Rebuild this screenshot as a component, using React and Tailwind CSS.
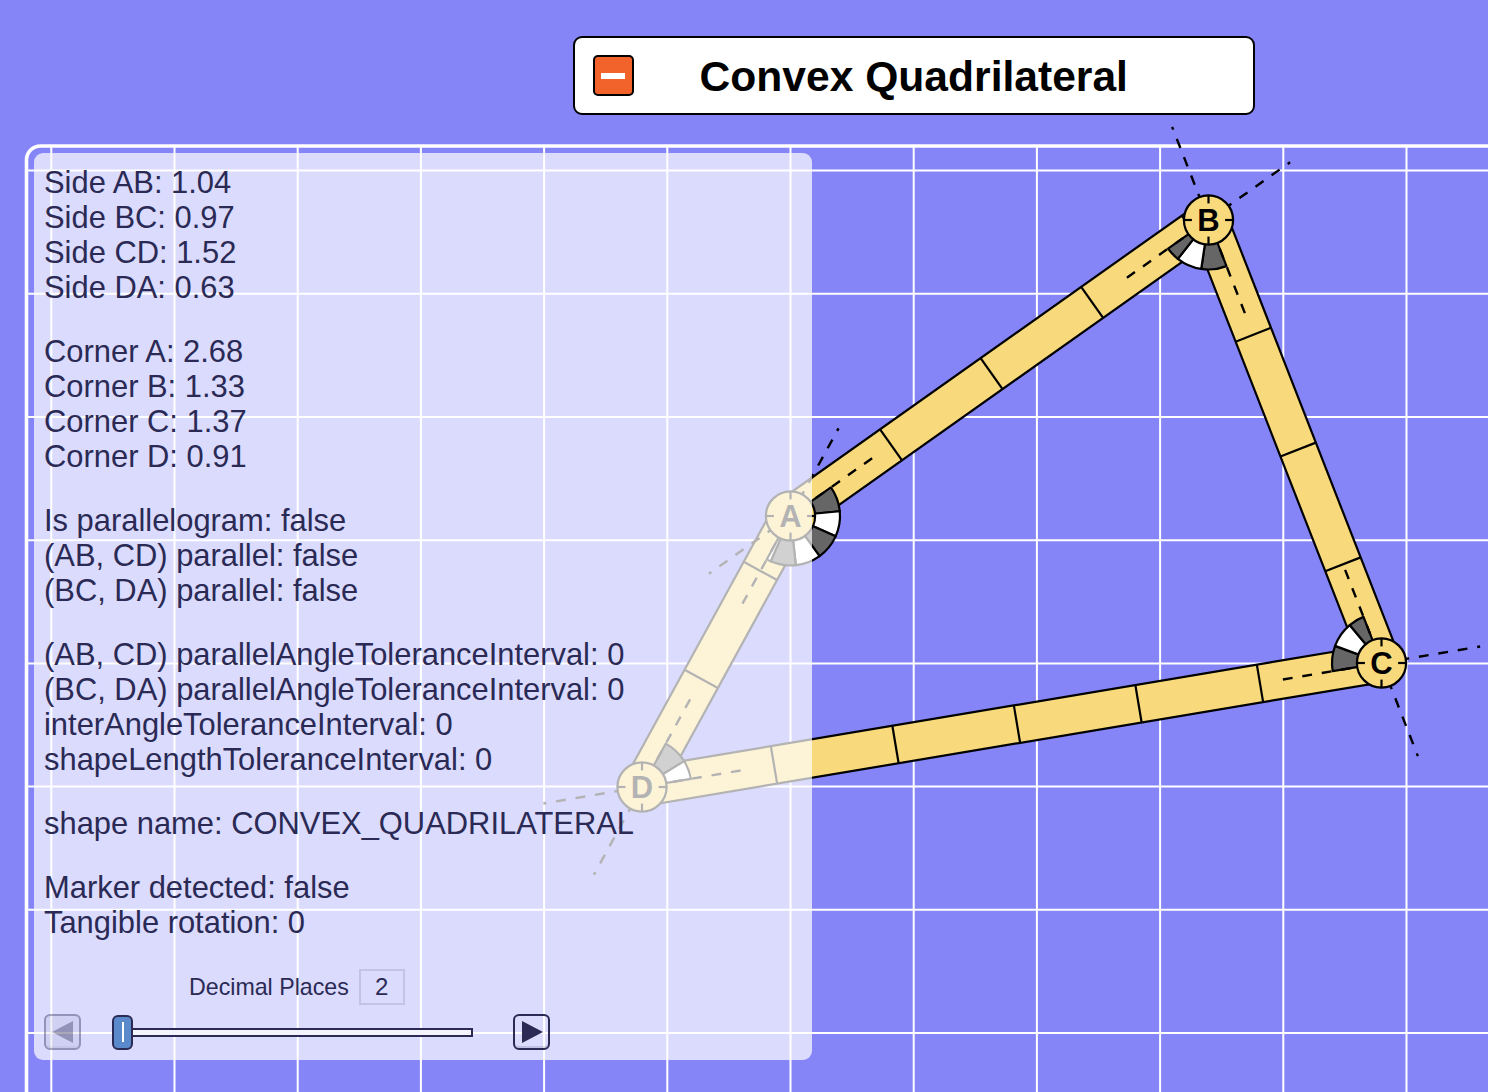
const GRID_X = [51.3, 174.5, 297.7, 420.9, 544.1, 667.3, 790.5, 913.7, 1036.9, 1160.1, 1283.3, 1406.5];
const GRID_Y = [170.6, 293.8, 417, 540.2, 663.4, 786.6, 909.8, 1033];

const A = { name: 'A', x: 790.5, y: 516 };
const B = { name: 'B', x: 1208.5, y: 220 };
const C = { name: 'C', x: 1381.5, y: 663 };
const D = { name: 'D', x: 642, y: 787 };
const CORNERS = [A, B, C, D];

const STRIP_W = 38;
const UNIT = 123.2;
const RADIUS = 24.6;
const WEDGE_R = 49.5;
const WEDGE_STEP = 0.52;
const DASH_LEN = 100;

const groups = [
  ['Side AB: 1.04', 'Side BC: 0.97', 'Side CD: 1.52', 'Side DA: 0.63'],
  ['Corner A: 2.68', 'Corner B: 1.33', 'Corner C: 1.37', 'Corner D: 0.91'],
  ['Is parallelogram: false', '(AB, CD) parallel: false', '(BC, DA) parallel: false'],
  [
    '(AB, CD) parallelAngleToleranceInterval: 0',
    '(BC, DA) parallelAngleToleranceInterval: 0',
    'interAngleToleranceInterval: 0',
    'shapeLengthToleranceInterval: 0',
  ],
  ['shape name: CONVEX_QUADRILATERAL'],
  ['Marker detected: false', 'Tangible rotation: 0'],
];

function dir(p, q) {
  const dx = q.x - p.x;
  const dy = q.y - p.y;
  const len = Math.hypot(dx, dy);
  return { x: dx / len, y: dy / len, len };
}

function Strip({ from, to }) {
  const d = dir(from, to);
  const nx = (-d.y * STRIP_W) / 2;
  const ny = (d.x * STRIP_W) / 2;
  const pts = [
    [from.x + nx, from.y + ny],
    [to.x + nx, to.y + ny],
    [to.x - nx, to.y - ny],
    [from.x - nx, from.y - ny],
  ];
  const ticks = [];
  for (let t = UNIT; t < d.len; t += UNIT) {
    const cx = from.x + d.x * t;
    const cy = from.y + d.y * t;
    ticks.push(<line key={t} x1={cx + nx} y1={cy + ny} x2={cx - nx} y2={cy - ny} stroke="#000" strokeWidth="2.2" />);
  }
  return (
    <g>
      <polygon points={pts.map((p) => p.join(',')).join(' ')} fill="#f8d97b" stroke="#000" strokeWidth="2.2" />
      {ticks}
    </g>
  );
}

function sector(c, a0, a1) {
  const p = (r, a) => `${c.x + r * Math.cos(a)} ${c.y + r * Math.sin(a)}`;
  const large = a1 - a0 > Math.PI ? 1 : 0;
  return `M${p(RADIUS - 4, a0)} L${p(WEDGE_R, a0)} A${WEDGE_R} ${WEDGE_R} 0 ${large} 1 ${p(WEDGE_R, a1)} L${p(RADIUS - 4, a1)} Z`;
}

// sectors go from the next side round to the previous one
function Wedges({ corner, next, prev }) {
  const d0 = dir(corner, next);
  const d1 = dir(corner, prev);
  const start = Math.atan2(d0.y, d0.x);
  let end = Math.atan2(d1.y, d1.x);
  if (end < start) end += Math.PI * 2;
  const parts = [];
  let i = 0;
  for (let a = start; a < end - 0.001; a += WEDGE_STEP) {
    parts.push(
      <path
        key={i}
        d={sector(corner, a, Math.min(a + WEDGE_STEP, end))}
        fill={i % 2 === 0 ? '#666666' : '#ffffff'}
        stroke="#000"
        strokeWidth="2.2"
        strokeLinejoin="round"
      />
    );
    i++;
  }
  return <g>{parts}</g>;
}

// each dashed line runs from the inner tip on the side, through the corner, to the outer tip
function Rays({ corner, next, prev }) {
  const lines = [dir(corner, prev), dir(corner, next)];
  return (
    <g>
      {lines.map((d, i) => (
        <line
          key={i}
          x1={corner.x + d.x * DASH_LEN}
          y1={corner.y + d.y * DASH_LEN}
          x2={corner.x - d.x * DASH_LEN}
          y2={corner.y - d.y * DASH_LEN}
          stroke="#000"
          strokeWidth="2.4"
          strokeDasharray="9.85 9.85"
        />
      ))}
    </g>
  );
}

function Vertex({ corner }) {
  const { x, y, name } = corner;
  const inner = RADIUS - 8;
  return (
    <g>
      <circle cx={x} cy={y} r={RADIUS} fill="#f8d97b" stroke="#000" strokeWidth="2.2" />
      <line x1={x} y1={y - RADIUS} x2={x} y2={y - inner} stroke="#000" strokeWidth="2.2" />
      <line x1={x} y1={y + RADIUS} x2={x} y2={y + inner} stroke="#000" strokeWidth="2.2" />
      <line x1={x - RADIUS} y1={y} x2={x - inner} y2={y} stroke="#000" strokeWidth="2.2" />
      <line x1={x + RADIUS} y1={y} x2={x + inner} y2={y} stroke="#000" strokeWidth="2.2" />
      <text
        x={x}
        y={y + 11}
        textAnchor="middle"
        fontSize="31"
        fontWeight="700"
        fontFamily="'Liberation Sans', sans-serif"
        fill="#000"
      >
        {name}
      </text>
    </g>
  );
}

function Canvas() {
  return (
    <svg className="absolute inset-0" width="1488" height="1092" viewBox="0 0 1488 1092">
      {GRID_X.map((x) => (
        <line key={x} x1={x} y1="146" x2={x} y2="1092" stroke="#fff" strokeWidth="2" />
      ))}
      {GRID_Y.map((y) => (
        <line key={y} x1="27" y1={y} x2="1488" y2={y} stroke="#fff" strokeWidth="2" />
      ))}
      <rect x="26.5" y="146" width="1600" height="1100" rx="14" fill="none" stroke="#fff" strokeWidth="3.6" />

      {CORNERS.map((c, i) => (
        <Strip key={c.name} from={c} to={CORNERS[(i + 1) % 4]} />
      ))}
      {CORNERS.map((c, i) => (
        <Wedges key={c.name} corner={c} next={CORNERS[(i + 1) % 4]} prev={CORNERS[(i + 3) % 4]} />
      ))}
      {CORNERS.map((c, i) => (
        <Rays key={c.name} corner={c} next={CORNERS[(i + 1) % 4]} prev={CORNERS[(i + 3) % 4]} />
      ))}
      {CORNERS.map((c) => (
        <Vertex key={c.name} corner={c} />
      ))}
    </svg>
  );
}

function ArrowButton({ left }) {
  return (
    <div
      className={`flex h-[36px] w-[37px] shrink-0 items-center justify-center rounded-[6px] border-2 border-[#2a2a55] shadow-[inset_0_-2px_0_rgba(42,42,85,0.15)] ${
        left ? 'bg-[#2a2a55]/15 opacity-40' : ''
      }`}
    >
      <svg width="24" height="24" viewBox="0 0 24 24">
        {left ? <polygon points="1,12 22,1 22,23" fill="#2a2a55" /> : <polygon points="2,1 23,12 2,23" fill="#2a2a55" />}
      </svg>
    </div>
  );
}

export default function App() {
  return (
    <div className="relative h-[1092px] w-[1488px] overflow-hidden bg-[#8585f8] font-['Liberation_Sans',Arial,sans-serif]">
      <Canvas />

      <div className="relative flex flex-col items-start">
        <div className="ml-[572.5px] mt-[36px] flex h-[79px] w-[682px] items-center rounded-[9px] border-2 border-black bg-white pl-[18px]">
          <div className="flex h-[41px] w-[41px] items-center justify-center rounded-[5px] border-2 border-black bg-[#f2622b]">
            <div className="h-[6px] w-[24px] bg-white" />
          </div>
          <div className="ml-[66px] mt-[2px] text-[42.6px] font-bold leading-none text-black">Convex Quadrilateral</div>
        </div>

        <div className="ml-[34px] mt-[38px] h-[907px] w-[778px] rounded-[9px] bg-white/70 pl-[10px] pt-[11.5px] text-[#2a2a55]">
          <div className="flex flex-col gap-[29px] text-[30.9px] leading-[35px]">
            {groups.map((lines, i) => (
              <div key={i}>
                {lines.map((line) => (
                  <div key={line} className="whitespace-nowrap">
                    {line}
                  </div>
                ))}
              </div>
            ))}
          </div>

          <div className="ml-[145px] mt-[29.5px] flex items-center gap-[10px] text-[23.2px]">
            <span>Decimal Places</span>
            <div className="flex h-[36px] w-[46px] items-center justify-center border-2 border-[#c3c3e6] text-[24px]">2</div>
          </div>

          <div className="mt-[9px] flex items-center">
            <ArrowButton left />
            <div className="relative ml-[31px] h-[9px] w-[361px] border-2 border-[#2a2a55] bg-[#f4f4ff]">
              <div className="absolute left-[-2px] top-[-15px] flex h-[35px] w-[21px] items-center justify-center rounded-[6px] border-2 border-[#2a2a55] bg-[#5a8acb]">
                <div className="h-[20px] w-[2px] bg-white" />
              </div>
            </div>
            <div className="ml-[40px]">
              <ArrowButton />
            </div>
          </div>
        </div>
      </div>
    </div>
  );
}
